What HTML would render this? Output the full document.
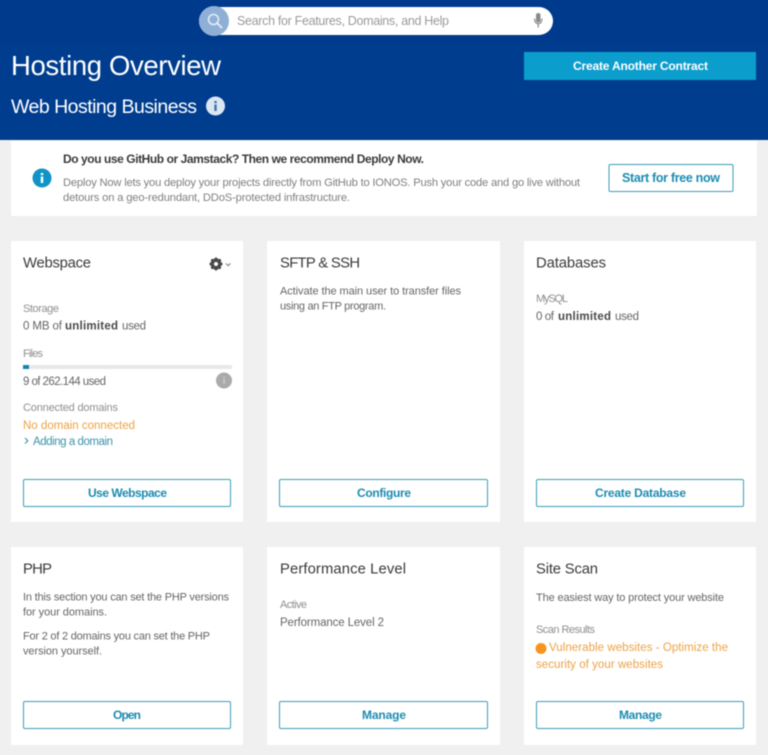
<!DOCTYPE html>
<html lang="en">
<head>
<meta charset="utf-8">
<title>Hosting Overview</title>
<style>
html,body{margin:0;padding:0;width:768px;height:755px;overflow:hidden;background:#f0f0f0}
.hd{position:absolute;left:0;top:0;width:768px;height:140px;background:#003d8f}
svg{display:block;position:absolute;left:0;top:0;filter:blur(.45px)}
text{font-family:"Liberation Sans",sans-serif;font-size:11px;fill:#666;white-space:pre}
.t{font-size:14.800px;fill:#3a3a3a}
.l{font-size:11px;fill:#8f8f8f}
.b{font-size:11.500px;fill:#666}
.s{font-weight:bold;fill:#4a4a4a}
.o{fill:#eda244}
.a{fill:#3a94ad}
.btn{font-size:12px;font-weight:bold;fill:#1d8cb0}
</style>
</head>
<body>
<div class="hd"></div>
<svg width="768" height="755" viewBox="0 0 768 755" xmlns="http://www.w3.org/2000/svg">
<rect width="768" height="755" fill="#f0f0f0"/>
<rect width="768" height="140" fill="#003d8f"/>
<rect y="0" width="768" height="43" fill="#003a8c"/>

<!-- search -->
<rect x="199" y="7" width="354" height="28" rx="14" fill="#fff"/>
<circle cx="214" cy="21" r="15" fill="#8fb0d6"/>
<circle cx="213.500" cy="19.500" r="5" fill="none" stroke="#e4edf6" stroke-width="1.500"/>
<path d="M217 23l4.500 4.500" stroke="#e4edf6" stroke-width="1.800" stroke-linecap="round"/>
<text x="237" y="25" textLength="212" style="font-size:12.500px;fill:#9a9a9a">Search for Features, Domains, and Help</text>
<rect x="536" y="13" width="4.500" height="9.500" rx="2.250" fill="#8a8a8a"/>
<path d="M534.500 18.500c0 7 7.500 7 7.500 0M538.200 24v3.500" fill="none" stroke="#8a8a8a" stroke-width="1.200"/>

<!-- header -->
<text x="11" y="75" textLength="210" style="font-size:27.500px;fill:#fff">Hosting Overview</text>
<rect x="524" y="52" width="232" height="28" fill="#0b9dcc"/>
<text x="573" y="70" textLength="135" style="font-size:12px;font-weight:bold;fill:#fff">Create Another Contract</text>
<text x="11" y="113" textLength="186" style="font-size:19.500px;fill:#fff">Web Hosting Business</text>
<circle cx="215.500" cy="106" r="9.500" fill="#dbe6f3"/>
<rect x="214.300" y="104.500" width="2.400" height="6.500" fill="#3f70ad"/>
<rect x="214.300" y="101" width="2.400" height="2.200" fill="#3f70ad"/>

<!-- banner -->
<rect x="11" y="141" width="746" height="75" fill="#fff"/>
<circle cx="42" cy="178" r="9.500" fill="#0f94c6"/>
<rect x="40.800" y="176.500" width="2.400" height="6.500" fill="#fff"/>
<rect x="40.800" y="173" width="2.400" height="2.200" fill="#fff"/>
<text x="63" y="163" textLength="361" style="font-size:12px;font-weight:bold;fill:#3a3a3a">Do you use GitHub or Jamstack? Then we recommend Deploy Now.</text>
<text x="63" y="186" textLength="517" style="font-size:11.200px;fill:#808080">Deploy Now lets you deploy your projects directly from GitHub to IONOS. Push your code and go live without</text>
<text x="63" y="201" textLength="287" style="font-size:11.200px;fill:#808080">detours on a geo-redundant, DDoS-protected infrastructure.</text>
<rect x="609" y="164.500" width="124" height="27" rx="1.500" fill="#fff" stroke="#3d9db8" stroke-width="1"/>
<text x="622" y="182" textLength="98" style="font-size:12.500px;font-weight:bold;fill:#1d8cb0">Start for free now</text>

<!-- cards -->
<g fill="#fff">
<rect x="11" y="241" width="232" height="281"/>
<rect x="267" y="241" width="233" height="281"/>
<rect x="524" y="241" width="232" height="281"/>
<rect x="11" y="547" width="232" height="198"/>
<rect x="267" y="547" width="233" height="198"/>
<rect x="524" y="547" width="232" height="198"/>
</g>

<!-- Webspace -->
<text x="23" y="267.500" textLength="68" class="t">Webspace</text>
<circle cx="216" cy="264" r="4" fill="none" stroke="#4a4a4a" stroke-width="3.200"/>
<path d="M216 257.500v13M209.500 264h13M211.400 259.400l9.200 9.200M220.600 259.400l-9.200 9.200" stroke="#4a4a4a" stroke-width="2.200"/>
<circle cx="216" cy="264" r="2" fill="#fff"/>
<path d="M226 263.500l2.200 2.200 2.200-2.200" fill="none" stroke="#777" stroke-width="1"/>
<text x="23" y="312" textLength="36" class="l">Storage</text>
<text x="23" y="329.500" textLength="39" class="b">0 MB of</text>
<text x="65" y="329.500" textLength="53" class="b s">unlimited</text>
<text x="122" y="329.500" textLength="24" class="b">used</text>
<text x="23" y="357" textLength="20" class="l">Files</text>
<rect x="23" y="365" width="209" height="4" fill="#e8e8e8"/>
<rect x="23" y="365" width="6" height="4" fill="#1287ad"/>
<text x="23" y="385" textLength="83" class="b">9 of 262.144 used</text>
<circle cx="224" cy="380.500" r="8" fill="#aaa"/>
<rect x="223.300" y="379" width="1.500" height="5" fill="#ccc"/>
<rect x="223.300" y="376.500" width="1.500" height="1.500" fill="#ccc"/>
<text x="23" y="411" textLength="95" class="l">Connected domains</text>
<text x="23" y="429" textLength="112" class="b o">No domain connected</text>
<path d="M25 438l2.800 2.800-2.800 2.800" fill="none" stroke="#3a94ad" stroke-width="1.100"/>
<text x="33" y="445" textLength="80" class="b a">Adding a domain</text>
<rect x="23.500" y="479.500" width="207" height="27" rx="1.500" fill="#fff" stroke="#3d9db8"/>
<text x="88" y="497" textLength="79" class="btn">Use Webspace</text>

<!-- SFTP -->
<text x="280" y="267.500" textLength="80" class="t">SFTP &amp; SSH</text>
<text x="280" y="294.500" textLength="181" class="b" style="font-size:11px">Activate the main user to transfer files</text>
<text x="280" y="309.500" textLength="106" class="b" style="font-size:11px">using an FTP program.</text>
<rect x="279.500" y="479.500" width="208" height="27" rx="1.500" fill="#fff" stroke="#3d9db8"/>
<text x="357" y="497" textLength="54" class="btn">Configure</text>

<!-- Databases -->
<text x="536" y="267.500" textLength="70" class="t">Databases</text>
<text x="536" y="302" textLength="32" class="l">MySQL</text>
<text x="536" y="320" textLength="18" class="b">0 of</text>
<text x="558" y="320" textLength="53" class="b s">unlimited</text>
<text x="615" y="320" textLength="24" class="b">used</text>
<rect x="536.500" y="479.500" width="207" height="27" rx="1.500" fill="#fff" stroke="#3d9db8"/>
<text x="595" y="497" textLength="91" class="btn">Create Database</text>

<!-- PHP -->
<text x="23" y="573.500" textLength="29" class="t">PHP</text>
<text x="23" y="600.500" textLength="206" class="b" style="font-size:11px">In this section you can set the PHP versions</text>
<text x="23" y="615.500" textLength="84" class="b" style="font-size:11px">for your domains.</text>
<text x="23" y="639.500" textLength="187" class="b" style="font-size:11px">For 2 of 2 domains you can set the PHP</text>
<text x="23" y="654.500" textLength="79" class="b" style="font-size:11px">version yourself.</text>
<rect x="23.500" y="701.500" width="207" height="27" rx="1.500" fill="#fff" stroke="#3d9db8"/>
<text x="113" y="719" textLength="28" class="btn">Open</text>

<!-- Performance -->
<text x="280" y="573.500" textLength="126" class="t">Performance Level</text>
<text x="280" y="608" textLength="27" class="l">Active</text>
<text x="280" y="626" textLength="104" class="b">Performance Level 2</text>
<rect x="279.500" y="701.500" width="208" height="27" rx="1.500" fill="#fff" stroke="#3d9db8"/>
<text x="362" y="719" textLength="44" class="btn">Manage</text>

<!-- Site Scan -->
<text x="536" y="573.500" textLength="62" class="t">Site Scan</text>
<text x="536" y="601" textLength="188" class="b" style="font-size:11px">The easiest way to protect your website</text>
<text x="536" y="633" textLength="59" class="l">Scan Results</text>
<circle cx="541" cy="648.500" r="5.500" fill="#f7941d"/>
<text x="549" y="651" textLength="179" class="b o">Vulnerable websites - Optimize the</text>
<text x="536" y="668" textLength="127" class="b o">security of your websites</text>
<rect x="536.500" y="701.500" width="207" height="27" rx="1.500" fill="#fff" stroke="#3d9db8"/>
<text x="619" y="719" textLength="43" class="btn">Manage</text>
</svg>
</body>
</html>
